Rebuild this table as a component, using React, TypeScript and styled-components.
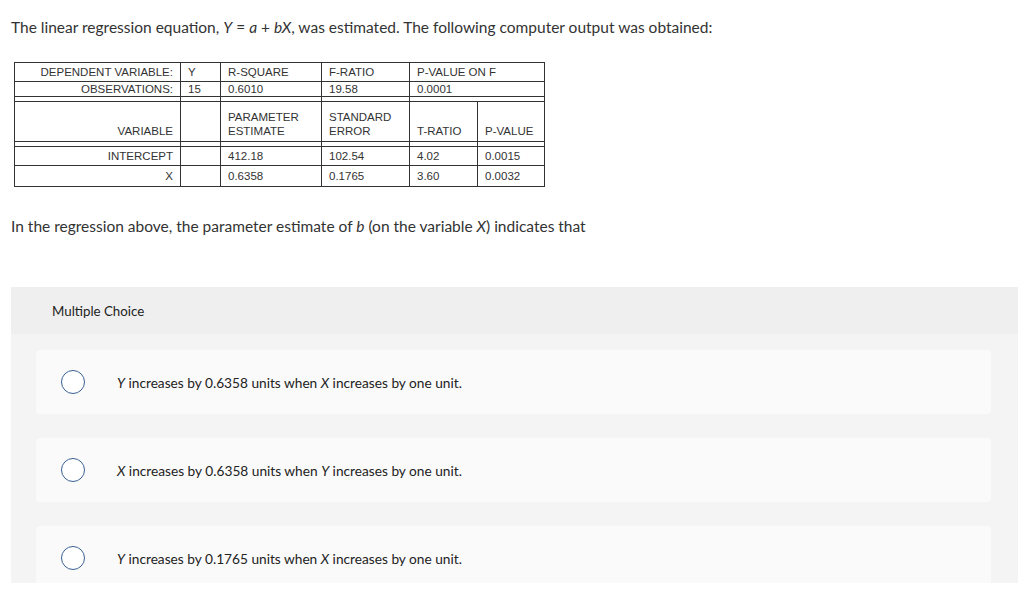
import React from "react";
import styled, { createGlobalStyle } from "styled-components";

const GlobalStyle = createGlobalStyle`
  html, body {
    margin: 0;
    padding: 0;
    background: #ffffff;
  }
  body {
    font-family: "Lato", "Open Sans", sans-serif;
    color: #333333;
  }
`;

type Option = {
  id: number;
  text: React.ReactNode;
};

const options: Option[] = [
  {
    id: 1,
    text: (
      <>
        <i>Y</i> increases by 0.6358 units when <i>X</i> increases by one unit.
      </>
    ),
  },
  {
    id: 2,
    text: (
      <>
        <i>X</i> increases by 0.6358 units when <i>Y</i> increases by one unit.
      </>
    ),
  },
  {
    id: 3,
    text: (
      <>
        <i>Y</i> increases by 0.1765 units when <i>X</i> increases by one unit.
      </>
    ),
  },
];

export default function App() {
  return (
    <Page>
      <GlobalStyle />
      <Prompt>
        The linear regression equation, <i>Y</i> = <i>a</i> + <i>bX</i>, was
        estimated. The following computer output was obtained:
      </Prompt>

      <Output>
        <colgroup>
          <col style={{ width: 166 }} />
          <col style={{ width: 40 }} />
          <col style={{ width: 101 }} />
          <col style={{ width: 88 }} />
          <col style={{ width: 68 }} />
          <col style={{ width: 67 }} />
        </colgroup>
        <tbody>
          <Row $h={19}>
            <Label>DEPENDENT VARIABLE:</Label>
            <Cell>Y</Cell>
            <Cell>R-SQUARE</Cell>
            <Cell>F-RATIO</Cell>
            <Cell colSpan={2}>P-VALUE ON F</Cell>
          </Row>
          <Row $h={15}>
            <Label>OBSERVATIONS:</Label>
            <Cell>15</Cell>
            <Cell>0.6010</Cell>
            <Cell>19.58</Cell>
            <Cell colSpan={2}>0.0001</Cell>
          </Row>
          <Row $h={5}>
            <Cell />
            <Cell />
            <Cell />
            <Cell />
            <Cell colSpan={2} />
          </Row>
          <Row $h={40}>
            <Label $bottom>VARIABLE</Label>
            <Cell />
            <Cell $bottom>
              PARAMETER
              <br />
              ESTIMATE
            </Cell>
            <Cell $bottom>
              STANDARD
              <br />
              ERROR
            </Cell>
            <Cell $bottom>T-RATIO</Cell>
            <Cell $bottom>P-VALUE</Cell>
          </Row>
          <Row $h={5}>
            <Cell />
            <Cell />
            <Cell />
            <Cell />
            <Cell />
            <Cell />
          </Row>
          <Row $h={19}>
            <Label>INTERCEPT</Label>
            <Cell />
            <Cell>412.18</Cell>
            <Cell>102.54</Cell>
            <Cell>4.02</Cell>
            <Cell>0.0015</Cell>
          </Row>
          <Row $h={21}>
            <Label>X</Label>
            <Cell />
            <Cell>0.6358</Cell>
            <Cell>0.1765</Cell>
            <Cell>3.60</Cell>
            <Cell>0.0032</Cell>
          </Row>
        </tbody>
      </Output>

      <Question>
        In the regression above, the parameter estimate of <i>b</i> (on the
        variable <i>X</i>) indicates that
      </Question>

      <ChoicePanel>
        <ChoiceHeader>Multiple Choice</ChoiceHeader>
        <ChoiceList>
          {options.map((o) => (
            <ChoiceCard key={o.id}>
              <Radio />
              <ChoiceText>{o.text}</ChoiceText>
            </ChoiceCard>
          ))}
        </ChoiceList>
      </ChoicePanel>
    </Page>
  );
}

const Page = styled.div`
  width: 1024px;
  height: 602px;
  box-sizing: border-box;
  padding: 17px 6px 0 11px;
  overflow: hidden;
  display: flex;
  flex-direction: column;
`;

const Prompt = styled.p`
  margin: 0;
  font-size: 15.5px;
  line-height: 20px;
  color: #333;
`;

const Output = styled.table`
  margin: 25px 0 0 3px;
  border-collapse: collapse;
  table-layout: fixed;
  width: 531px;
  font-family: "Liberation Sans", Arial, sans-serif;
  font-size: 11.5px;
  color: #333;
  border: 1px solid #333;
`;

const Row = styled.tr<{ $h: number }>`
  height: ${(p) => p.$h}px;
`;

const Cell = styled.td<{ $bottom?: boolean }>`
  border: 1px solid #333;
  padding: 0 7px;
  line-height: 14px;
  vertical-align: ${(p) => (p.$bottom ? "bottom" : "middle")};
  padding-bottom: ${(p) => (p.$bottom ? "3px" : "0")};
  white-space: nowrap;
  overflow: hidden;
`;

const Label = styled(Cell)`
  text-align: right;
  padding-right: 7px;
`;

const Question = styled.p`
  margin: 29px 0 0;
  font-size: 15.5px;
  line-height: 20px;
  color: #333;
`;

const ChoicePanel = styled.section`
  margin-top: 51px;
  height: 296px;
  background: #f4f4f4;
  overflow: hidden;
`;

const ChoiceHeader = styled.div`
  height: 47px;
  background: #efefef;
  padding-left: 41px;
  display: flex;
  align-items: center;
  font-size: 13.3px;
  color: #222;
`;

const ChoiceList = styled.div`
  display: flex;
  flex-direction: column;
  gap: 24px;
  padding: 16px 27px 0 25px;
`;

const ChoiceCard = styled.div`
  flex: 0 0 64px;
  background: #fafafa;
  border-radius: 4px;
  display: flex;
  align-items: center;
  padding-left: 25px;
`;

const Radio = styled.span`
  width: 22px;
  height: 22px;
  border: 1.5px solid #3a5f93;
  border-radius: 50%;
  background: #fff;
  flex: 0 0 auto;
`;

const ChoiceText = styled.span`
  margin-left: 32px;
  font-size: 13.7px;
  color: #222;
`;
